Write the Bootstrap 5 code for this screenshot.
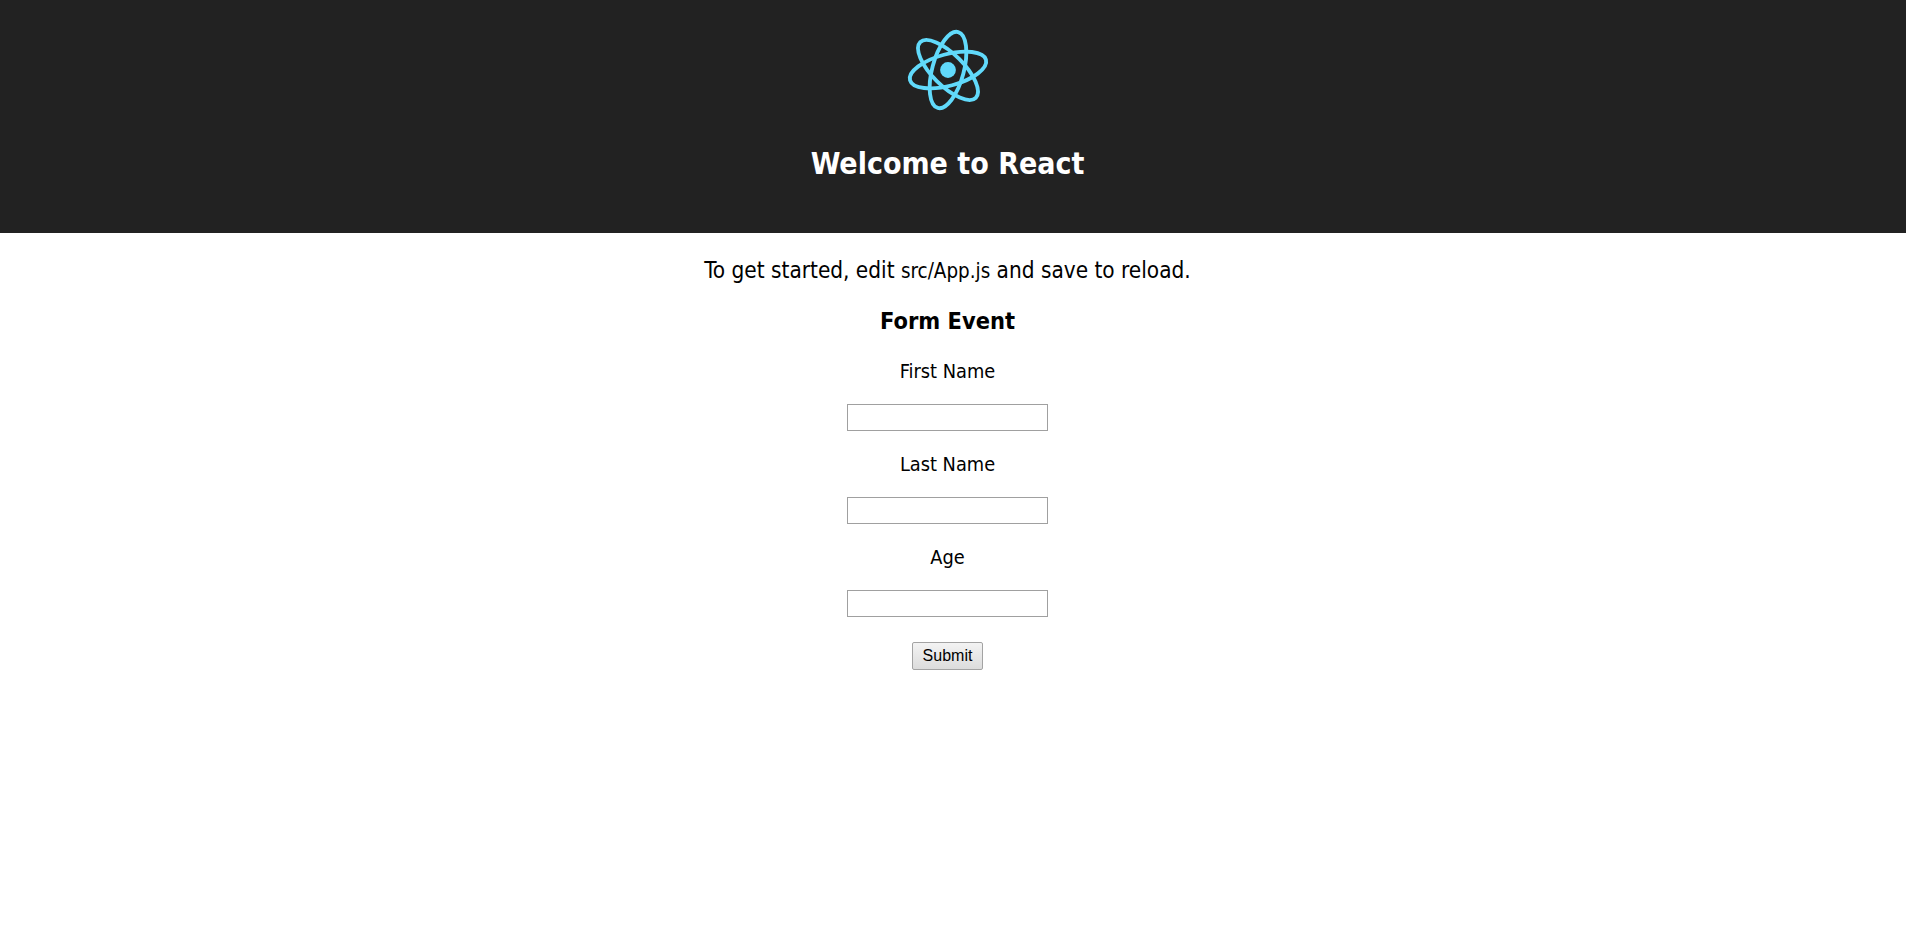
<!DOCTYPE html>
<html lang="en">
<head>
<meta charset="utf-8">
<title>React App</title>
<link href="https://cdn.jsdelivr.net/npm/bootstrap@5.3.0/dist/css/bootstrap.min.css" rel="stylesheet">
<style>
body { background: #fff; color: #000; font-family: "DejaVu Sans Condensed", "DejaVu Sans", sans-serif; font-size: 20px; }
.page-wrap { text-align: center; }
.app-head { background: #222; height: 233px; padding: 28px 11px 0 0; }
.app-logo { width: 84px; height: 84px; display: block; }
.app-title { font-size: 30px; font-weight: 700; line-height: 34px; margin: 35px 0 0; color: #fff; }
.app-body { padding-right: 11px; }
.app-intro { font-size: 22.4px; line-height: 30px; margin: 22px 0 0; }
.app-intro span { font-size: 20.4px; }
.form-title { font-size: 23.4px; font-weight: 700; line-height: 30px; margin: 20px 0 2px; }
.field-label { font-size: 19.8px; line-height: 24px; margin: 22px 0 0; display: block; }
.field-input { width: 201px; height: 27px; border: 1px solid #a0a0a0; border-radius: 0; background: #fff; padding: 1px 2px; margin-top: 20px; display: block; outline: 0; }
.submit-btn { font-family: "Liberation Sans", Arial, sans-serif; font-size: 16px; line-height: 18px; color: #000; width: 71px; height: 28px; margin-top: 25px; padding: 0; border: 1px solid #a3a3a3; border-radius: 2px; background: linear-gradient(#f3f3f3, #dcdcdc); }
</style>
</head>
<body>
<div class="page-wrap">
  <header class="app-head d-flex flex-column align-items-center">
    <svg class="app-logo" viewBox="-12.5 -12.5 25 25" fill="none" aria-label="logo">
      <circle r="2.35" fill="#61dafb"/>
      <g stroke="#61dafb" stroke-width="1.15" transform="rotate(-15)">
        <ellipse rx="11.7" ry="4.7"/>
        <ellipse rx="11.7" ry="4.7" transform="rotate(60)"/>
        <ellipse rx="11.7" ry="4.7" transform="rotate(120)"/>
      </g>
    </svg>
    <h1 class="app-title">Welcome to React</h1>
  </header>
  <div class="app-body">
    <p class="app-intro">To get started, edit <span>src/App.js</span> and save to reload.</p>
    <form class="d-flex flex-column align-items-center">
      <h2 class="form-title">Form Event</h2>
      <label class="field-label" for="f1">First Name</label>
      <input class="field-input" id="f1" type="text">
      <label class="field-label" for="f2">Last Name</label>
      <input class="field-input" id="f2" type="text">
      <label class="field-label" for="f3">Age</label>
      <input class="field-input" id="f3" type="text">
      <button class="submit-btn" type="button">Submit</button>
    </form>
  </div>
</div>
<script src="https://cdn.jsdelivr.net/npm/bootstrap@5.3.0/dist/js/bootstrap.bundle.min.js"></script>
</body>
</html>
